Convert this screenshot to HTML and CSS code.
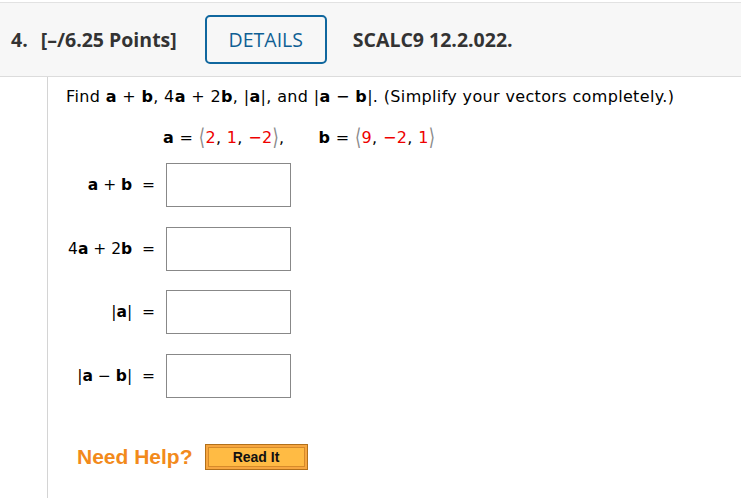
FILE: index.html
```html
<!DOCTYPE html>
<html>
<head>
<meta charset="utf-8">
<link rel="stylesheet" href="styles.css">
</head>
<body>
<div class="question">
  <div class="header">
    <span class="qnum">4.</span>
    <span class="points">[–/6.25 Points]</span>
    <button class="details">DETAILS</button>
    <span class="code">SCALC9 12.2.022.</span>
  </div>
  <div class="qbody">
    <p class="prompt">Find <b>a</b> + <b>b</b>, 4<b>a</b> + 2<b>b</b>, |<b>a</b>|, and |<b>a</b> − <b>b</b>|. (Simplify your vectors completely.)</p>
    <p class="vectors"><b>a</b> = <span class="br">⟨</span><span class="num">2</span>, <span class="num">1</span>, <span class="num">−2</span><span class="br">⟩</span>,<span class="sep"></span><b>b</b> = <span class="br">⟨</span><span class="num">9</span>, <span class="num">−2</span>, <span class="num">1</span><span class="br">⟩</span></p>
    <div class="rows">
      <div class="row"><span class="label"><b>a</b> + <b>b</b> &nbsp;=</span><span class="box"></span></div>
      <div class="row"><span class="label">4<b>a</b> + 2<b>b</b> &nbsp;=</span><span class="box"></span></div>
      <div class="row"><span class="label">|<b>a</b>| &nbsp;=</span><span class="box"></span></div>
      <div class="row"><span class="label">|<b>a</b> − <b>b</b>| &nbsp;=</span><span class="box"></span></div>
    </div>
    <div class="help">
      <span class="need">Need Help?</span>
      <span class="readit"><span class="readit-in">Read It</span></span>
    </div>
  </div>
</div>
</body>
</html>
```
FILE: styles.css
```css
html, body { margin: 0; padding: 0; background: #fff; }
body { padding-top: 2px; }
.question { width: 741px; }
.header {
  background: #f7f7f7;
  border-top: 1px solid #e2e2e2;
  border-bottom: 1px solid #dcdcdc;
  height: 73px;
  display: flex;
  align-items: center;
  font-family: "Open Sans", sans-serif;
  font-weight: 700;
  font-size: 19.5px;
  color: #333;
  padding-left: 11px;
  box-sizing: content-box;
}
.qnum { margin-right: 13px; }
.points { margin-right: 28px; }
.details {
  font-family: "Open Sans", sans-serif;
  font-weight: 400;
  font-size: 19.5px;
  color: #0f5f94;
  background: transparent;
  border: 2px solid #10679e;
  border-radius: 5px;
  width: 122px;
  height: 49px;
  padding: 0;
  margin: 0 26px 0 0;
}
.qbody {
  margin-left: 47px;
  border-left: 1px solid #d4d4d4;
  padding-left: 18px;
  height: 421px;
  font-family: "DejaVu Sans", Verdana, sans-serif;
  font-size: 16px;
  letter-spacing: 0.35px;
  color: #000;
}
.prompt { margin: 0; padding-top: 10px; line-height: 20px; }
.vectors { margin: 0; padding-top: 21px; padding-left: 97px; line-height: 20px; }
.br { color: #888; display: inline-block; transform: scaleY(1.45); transform-origin: 50% 55%; }
.num { color: #e00; }
.sep { display: inline-block; width: 34px; }
.rows { padding-top: 15px; display: flex; flex-direction: column; gap: 19.5px; }
.row { display: flex; align-items: center; height: 44px; }
.label { width: 89px; text-align: right; margin-right: 11px; white-space: nowrap; letter-spacing: 0; font-size: 15.5px; }
.box { width: 123px; height: 42px; border: 1px solid #888; background: #fff; }
.help { display: flex; align-items: center; margin-top: 46px; padding-left: 11px; }
.need {
  font-family: "Liberation Sans", Arial, sans-serif;
  font-weight: 700;
  font-size: 21px;
  letter-spacing: 0;
  color: #f28a1b;
  margin-right: 12px;
}
.readit {
  display: block;
  width: 97px;
  height: 20px;
  border: 1px solid #b2701a;
  background: #f6a640;
  padding: 2px;
  box-sizing: content-box;
}
.readit-in {
  display: flex;
  align-items: center;
  justify-content: center;
  box-sizing: border-box;
  height: 20px;
  border: 1px solid #d68a2a;
  background: #ffbb44;
  font-family: "Liberation Sans", Arial, sans-serif;
  font-weight: 700;
  font-size: 14px;
  letter-spacing: 0;
  color: #111;
}
```
